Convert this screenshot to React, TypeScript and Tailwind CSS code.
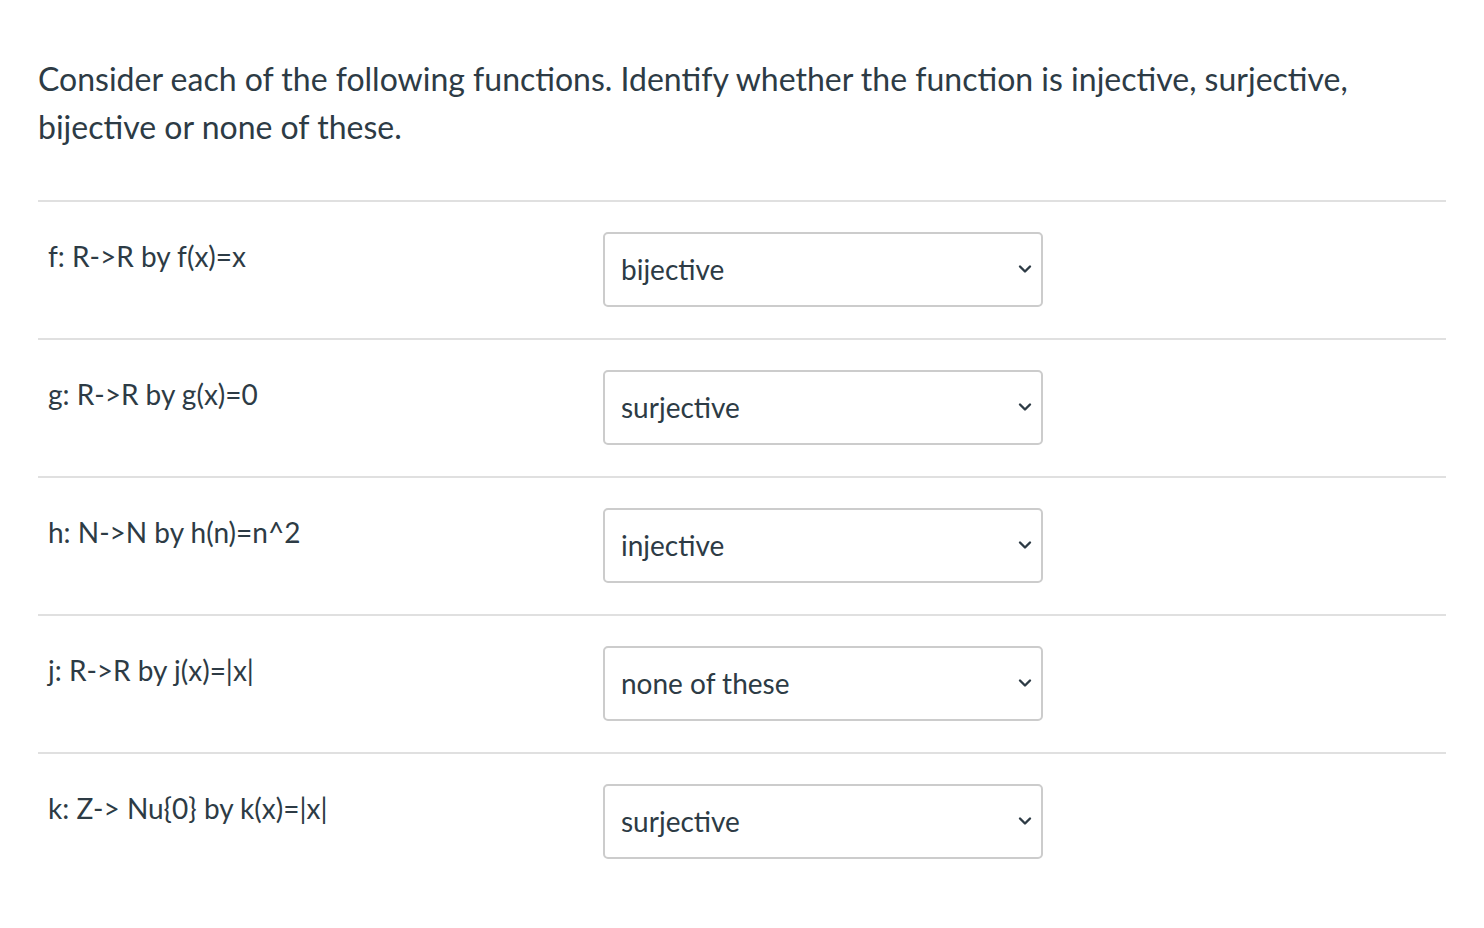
import React from "react";

const rows = [
  { label: "f: R->R by f(x)=x", value: "bijective" },
  { label: "g: R->R by g(x)=0", value: "surjective" },
  { label: "h: N->N by h(n)=n^2", value: "injective" },
  { label: "j: R->R by j(x)=|x|", value: "none of these" },
  { label: "k: Z-> Nu{0} by k(x)=|x|", value: "surjective" },
];

function Chevron() {
  return (
    <svg width="14" height="10" viewBox="0 0 14 10" className="shrink-0">
      <path d="M2 2.5 L7 7.5 L12 2.5" fill="none" stroke="#2d3b45" strokeWidth="2.4" strokeLinecap="round" strokeLinejoin="round" />
    </svg>
  );
}

export default function App() {
  return (
    <div className="w-[1484px] h-[928px] bg-white text-[#2d3b45] overflow-hidden" style={{ fontFamily: "Lato, 'Open Sans', sans-serif" }}>
      <div className="px-[38px] pt-[55px]">
        <p className="text-[32px] leading-[48px] w-[1380px]">
          Consider each of the following functions. Identify whether the function is injective, surjective, bijective or none of these.
        </p>
        <div className="mt-[49px] w-[1408px]">
          {rows.map((r, i) => (
            <div key={i} className="border-t-2 border-[#e0e0e0] flex items-start pt-[30px] pb-[31px]">
              <div className="w-[565px] pl-[10px] pt-[4px] text-[28px] leading-[40px]">{r.label}</div>
              <div className="w-[440px] h-[75px] border-2 border-[#cccccc] rounded-[5px] flex items-center justify-between pl-[16px] pr-[9px] pb-[2px] text-[28px]">
                <span>{r.value}</span>
                <Chevron />
              </div>
            </div>
          ))}
        </div>
      </div>
    </div>
  );
}
